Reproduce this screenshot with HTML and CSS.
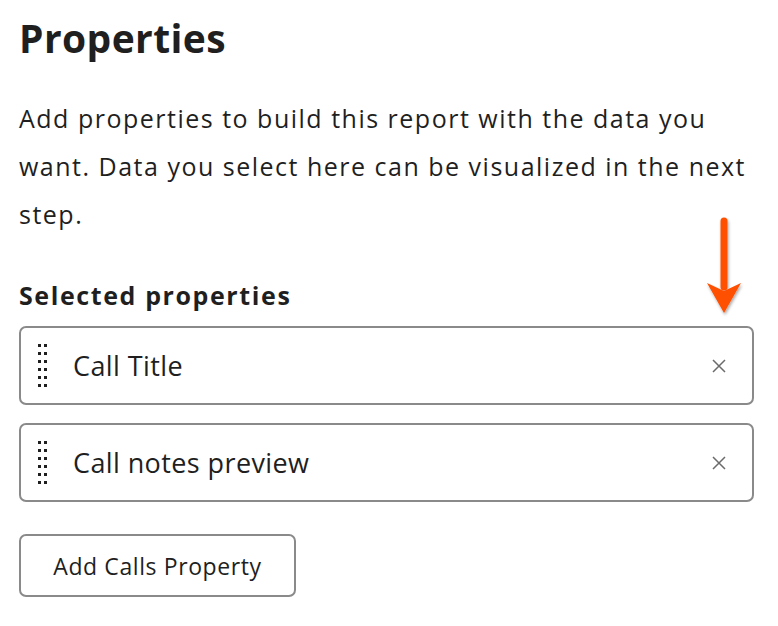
FILE: index.html
```html
<!DOCTYPE html>
<html>
<head>
<meta charset="utf-8">
<link rel="stylesheet" href="styles.css">
</head>
<body>
<div class="panel">
  <h1 class="title">Properties</h1>
  <p class="intro">Add properties to build this report with the data you want. Data you select here can be visualized in the next step.</p>
  <h2 class="subtitle">Selected properties</h2>
  <div class="list">
    <div class="item">
      <span class="handle"><i></i><i></i><i></i><i></i><i></i><i></i><i></i><i></i><i></i><i></i><i></i><i></i></span>
      <span class="label">Call Title</span>
      <svg class="close" width="14" height="14" viewBox="0 0 14 14"><path d="M1 1L13 13M13 1L1 13" stroke="#6b6b6b" stroke-width="1.5" fill="none"/></svg>
    </div>
    <div class="item">
      <span class="handle"><i></i><i></i><i></i><i></i><i></i><i></i><i></i><i></i><i></i><i></i><i></i><i></i></span>
      <span class="label">Call notes preview</span>
      <svg class="close" width="14" height="14" viewBox="0 0 14 14"><path d="M1 1L13 13M13 1L1 13" stroke="#6b6b6b" stroke-width="1.5" fill="none"/></svg>
    </div>
  </div>
  <button class="add">Add Calls Property</button>
  <svg class="arrow" width="50" height="110" viewBox="0 0 50 110">
    <defs>
      <filter id="sh" x="-50%" y="-20%" width="200%" height="150%">
        <feDropShadow dx="1" dy="2" stdDeviation="1.5" flood-color="#000" flood-opacity="0.35"/>
      </filter>
    </defs>
    <g filter="url(#sh)">
      <line x1="20" y1="6" x2="20" y2="72" stroke="#ff4f00" stroke-width="7" stroke-linecap="round"/>
      <path d="M3 68 L20 76 L37 68 L20 98 Z" fill="#ff4f00"/>
    </g>
  </svg>
</div>
</body>
</html>
```
FILE: styles.css
```css
* { box-sizing: border-box; }
body {
  margin: 0;
  background: #fff;
  font-family: "Open Sans", "Noto Sans", sans-serif;
  color: #1f1f1f;
}
.panel {
  position: relative;
  padding: 14px 0 0 19px;
  width: 778px;
  height: 626px;
}
.title {
  margin: 0;
  font-size: 39px;
  line-height: 48px;
  font-weight: 700;
  letter-spacing: 0.4px;
}
.intro {
  margin: 32px 0 0;
  width: 745px;
  font-size: 25px;
  line-height: 48px;
  font-weight: 400;
  letter-spacing: 1.5px;
}
.subtitle {
  margin: 39px 0 0;
  font-size: 25px;
  line-height: 36px;
  font-weight: 700;
  letter-spacing: 1.6px;
}
.list {
  margin-top: 13px;
  width: 735px;
  display: flex;
  flex-direction: column;
  gap: 18px;
}
.item {
  height: 79px;
  border: 2px solid #8a8a8a;
  border-radius: 7px;
  display: flex;
  align-items: center;
  padding: 0 26px 0 17px;
}
.handle {
  display: grid;
  grid-template-columns: 3px 3px;
  column-gap: 3px;
  row-gap: 5px;
  width: 9px;
}
.handle i {
  display: block;
  width: 3px;
  height: 3px;
  background: #1f1f1f;
}
.label {
  margin-left: 26px;
  font-size: 27px;
  letter-spacing: 0.4px;
  flex: 1;
}
.close { display: block; }
.add {
  margin-top: 32px;
  width: 277px;
  height: 63px;
  border: 2px solid #8a8a8a;
  border-radius: 7px;
  background: #fff;
  font-family: inherit;
  font-size: 23px;
  letter-spacing: 0.6px;
  color: #1f1f1f;
  padding: 0;
}
.arrow {
  position: absolute;
  left: 704px;
  top: 215px;
}
```
